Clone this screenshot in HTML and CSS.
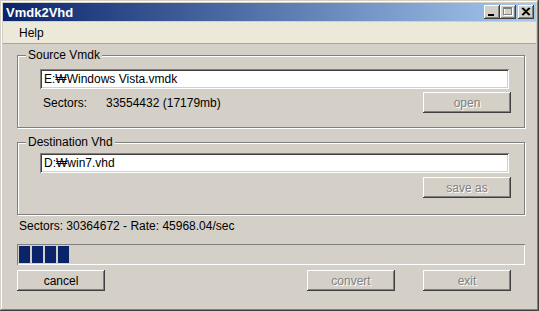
FILE: index.html
```html
<!DOCTYPE html>
<html lang="en">
<head>
    <meta charset="UTF-8">
    <title>Vmdk2Vhd</title>
    <link rel="stylesheet" href="styles.css">
</head>
<body>
    <div class="window">
        <div class="titlebar">
            <span class="title">Vmdk2Vhd</span>
            <div class="caption-buttons">
                <span class="cap-btn">
                    <svg width="16" height="14" viewBox="0 0 16 14"><rect x="4" y="9" width="6" height="2" fill="#000"/></svg>
                </span>
                <span class="cap-btn">
                    <svg width="16" height="14" viewBox="0 0 16 14">
                        <rect x="4.5" y="3.5" width="8" height="7" fill="none" stroke="#fff"/>
                        <rect x="3.5" y="2.5" width="8" height="7" fill="none" stroke="#808080"/>
                        <rect x="3" y="2" width="9" height="2" fill="#808080"/>
                    </svg>
                </span>
                <span class="cap-btn close">
                    <svg width="16" height="14" viewBox="0 0 16 14"><path d="M4 3 L11 10 M5 3 L12 10 M11 3 L4 10 M12 3 L5 10" stroke="#000" stroke-width="1.2"/></svg>
                </span>
            </div>
        </div>
        <div class="menubar">
            <span class="menu-item">Help</span>
        </div>
        <div class="content">
            <div class="group source">
                <span class="legend">Source Vmdk</span>
                <div class="field">E:₩Windows Vista.vmdk</div>
                <div class="row">
                    <span class="label">Sectors:</span>
                    <span class="value">33554432 (17179mb)</span>
                    <button class="btn disabled">open</button>
                </div>
            </div>
            <div class="group dest">
                <span class="legend">Destination Vhd</span>
                <div class="field">D:₩win7.vhd</div>
                <div class="row">
                    <button class="btn disabled">save as</button>
                </div>
            </div>
            <div class="status">Sectors: 30364672 - Rate: 45968.04/sec</div>
            <div class="progress">
                <span class="block"></span>
                <span class="block"></span>
                <span class="block"></span>
                <span class="block"></span>
            </div>
            <div class="actions">
                <button class="btn">cancel</button>
                <div class="spacer"></div>
                <button class="btn disabled">convert</button>
                <button class="btn disabled">exit</button>
            </div>
        </div>
    </div>
</body>
</html>
```

FILE: styles.css
```css
body {
    margin: 0;
    font-family: "Liberation Sans", Arial, sans-serif;
    font-size: 12px;
    color: #000;
    background: #d4d0c8;
}

.window {
    width: 539px;
    height: 311px;
    box-sizing: border-box;
    padding: 3px;
    background: #d4d0c8;
    box-shadow: inset -1px -1px #404040, inset 1px 1px #d4d0c8,
                inset -2px -2px #808080, inset 2px 2px #fff;
}

.titlebar {
    height: 18px;
    display: flex;
    align-items: center;
    justify-content: space-between;
    padding-left: 3px;
    background: linear-gradient(to right, #0a246a, #a6caf0);
}

.title {
    color: #fff;
    font-weight: bold;
    font-size: 13px;
}

.caption-buttons {
    display: flex;
    padding-right: 2px;
}

.cap-btn {
    width: 16px;
    height: 14px;
    display: block;
    background: #d4d0c8;
    box-shadow: inset -1px -1px #404040, inset 1px 1px #fff,
                inset -2px -2px #808080;
}

.cap-btn svg {
    display: block;
}

.cap-btn.close {
    margin-left: 2px;
}

.menubar {
    margin-top: 1px;
    height: 21px;
    display: flex;
    align-items: center;
    background: #ece9d8;
    border-bottom: 1px solid #aca899;
}

.menu-item {
    padding-left: 16px;
}

.content {
    padding: 11px 0 0 14px;
}

.group {
    position: relative;
    width: 508px;
    height: 73px;
    box-sizing: border-box;
    border: 1px solid #808080;
    box-shadow: inset 1px 1px #fff, 1px 1px #fff;
    padding: 13px 0 0 22px;
}

.group.dest {
    margin-top: 14px;
    padding-top: 10px;
}

.legend {
    position: absolute;
    top: -8px;
    left: 8px;
    padding: 0 2px;
    line-height: 14px;
    background: #d4d0c8;
}

.field {
    width: 469px;
    height: 20px;
    box-sizing: border-box;
    padding: 0 4px;
    line-height: 20px;
    background: #fff;
    box-shadow: inset 1px 1px #808080, inset -1px -1px #fff,
                inset 2px 2px #404040, inset -2px -2px #d4d0c8;
}

.row {
    display: flex;
    align-items: center;
    width: 471px;
    margin-top: 3px;
}

.dest .row {
    margin-top: 4px;
    justify-content: flex-end;
}

.label {
    padding-left: 3px;
    width: 63px;
}

.value {
    flex: 1;
}

.btn {
    width: 88px;
    height: 21px;
    padding: 0;
    border: none;
    font-family: inherit;
    font-size: 12px;
    color: #000;
    background: #d4d0c8;
    box-shadow: inset -1px -1px #404040, inset 1px 1px #fff,
                inset -2px -2px #808080;
}

.btn.disabled {
    color: #808080;
    text-shadow: 1px 1px #fff;
}

.status {
    margin-top: 4px;
    padding-left: 2px;
    line-height: 14px;
}

.progress {
    margin-top: 11px;
    width: 508px;
    height: 21px;
    box-sizing: border-box;
    padding: 2px;
    display: flex;
    gap: 2px;
    box-shadow: inset 1px 1px #808080, inset -1px -1px #fff;
}

.block {
    width: 11px;
    height: 17px;
    background: #0a246a;
}

.actions {
    margin-top: 5px;
    width: 494px;
    display: flex;
}

.spacer {
    flex: 1;
}

.actions .btn + .btn {
    margin-left: 28px;
}
```
